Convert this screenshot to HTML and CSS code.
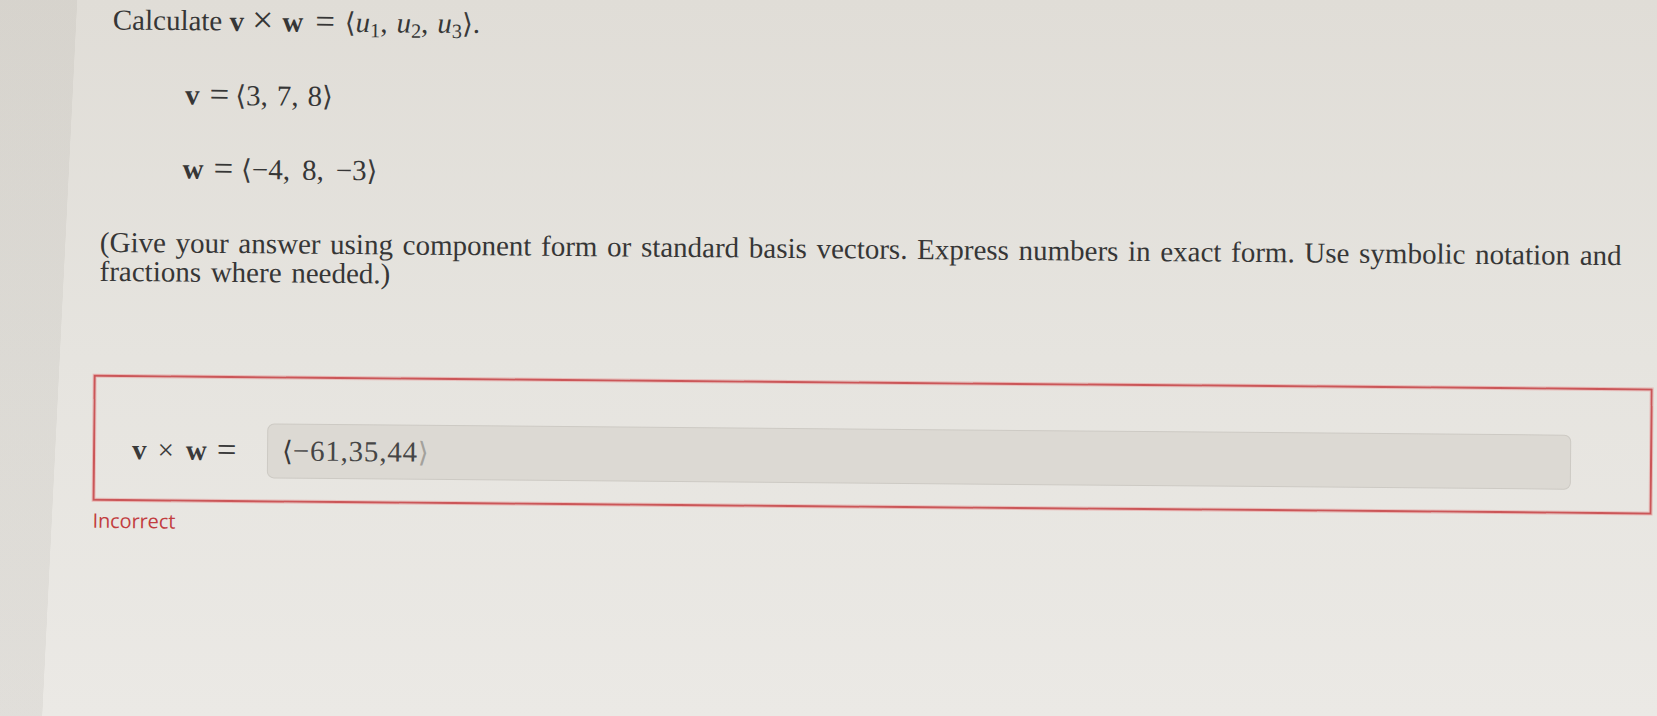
FILE: index.html
```html
<!DOCTYPE html>
<html lang="en">
<head>
<meta charset="utf-8">
<title>Cross product</title>
<link rel="stylesheet" href="styles.css">
</head>
<body>
<div class="page">
  <div class="content">
    <p class="question">Calculate <span class="m"><b class="vec">v</b><span class="bin">×</span><b class="vec">w</b><span class="rel">=</span><span class="br">⟨</span><i>u</i><sub>1</sub><span class="comma">,</span><i>u</i><sub>2</sub><span class="comma">,</span><i>u</i><sub>3</sub><span class="br">⟩</span></span>.</p>

    <div class="eq eq-v"><span class="m"><b class="vec">v</b><span class="rel">=</span><span class="br">⟨</span>3<span class="comma">,</span>7<span class="comma">,</span>8<span class="br">⟩</span></span></div>
    <div class="eq eq-w"><span class="m"><b class="vec">w</b><span class="rel">=</span><span class="br">⟨</span>−4<span class="comma">,</span>8<span class="comma">,</span>−3<span class="br">⟩</span></span></div>

    <p class="note">(Give your answer using component form or standard basis vectors. Express numbers in exact form. Use symbolic notation and fractions where needed.)</p>

    <div class="answer-box">
      <div class="answer-row">
        <span class="label m"><b class="vec">v</b><span class="bin">×</span><b class="vec">w</b><span class="rel">=</span></span>
        <div class="input"><span class="br">⟨</span><span class="ans">−61,35,44</span><span class="br ghost">⟩</span></div>
      </div>
    </div>
    <div class="status">Incorrect</div>
  </div>
</div>
</body>
</html>
```

FILE: styles.css
```css
html, body {
  margin: 0;
  padding: 0;
}

body {
  width: 1657px;
  height: 716px;
  overflow: hidden;
  background:
    linear-gradient(92.8deg, rgba(120, 115, 105, 0.09) 76.9px, rgba(0, 0, 0, 0) 77.4px),
    linear-gradient(180deg, #e0ddd7 0%, #e6e4df 50%, #ebe9e5 100%);
  font-family: "Liberation Serif", "Times New Roman", serif;
  color: #363636;
}

.page {
  width: 100%;
  height: 100%;
}

.content {
  transform: rotate(0.5deg);
  transform-origin: 0 0;
  padding-top: 0;
}

.question {
  margin: 0 0 0 113px;
  font-size: 29px;
  line-height: 34px;
}

.m {
  font-family: "Liberation Serif", "Times New Roman", serif;
}

.vec {
  font-weight: bold;
}

.bin {
  font-size: 1.3em;
  vertical-align: -0.04em;
  margin: 0 9px 0 8px;
}

.rel {
  font-size: 1.2em;
  vertical-align: -0.03em;
  margin: 0 10px 0 12px;
}

.comma {
  margin-right: 9px;
}

.br {
  font-family: "DejaVu Serif", serif;
  font-size: 0.95em;
  color: #3a3a3a;
}

i {
  font-style: italic;
}

sub {
  font-size: 0.7em;
  vertical-align: -0.25em;
  line-height: 0;
}

.eq {
  margin-left: 186px;
  font-size: 29px;
  line-height: 34px;
}

.eq .rel {
  margin: 0 6px 0 10px;
}

.eq .comma {
  margin-right: 9px;
}

.eq-v {
  margin-top: 40px;
}

.eq-w {
  margin-top: 40px;
  margin-left: 184px;
}

.eq-w .rel {
  margin-right: 8px;
}

.eq-w .comma {
  margin-right: 12px;
}

.note {
  margin: 43px 0 0 102px;
  width: 1545px;
  font-size: 29px;
  line-height: 29px;
  word-spacing: 2.4px;
}

.answer-box {
  margin: 89px 0 0 97px;
  width: 1559px;
  border: 2px solid #cb5658;
  box-shadow: 0 0 0 1px rgba(235, 150, 150, 0.55), inset 0 0 0 1px rgba(235, 150, 150, 0.45);
  padding: 45px 79px 22px 37px;
  box-sizing: border-box;
}

.answer-row {
  display: flex;
  align-items: center;
}

.label {
  width: 135px;
  flex: 0 0 auto;
  font-size: 29px;
  line-height: 34px;
  color: #3a3a3a;
}

.label .bin {
  font-size: 1em;
  vertical-align: 0;
  margin: 0 12px 0 11px;
}

.label .rel {
  margin: 0 0 0 10px;
}

.input {
  flex: 1 1 auto;
  height: 55px;
  box-sizing: border-box;
  border: 1px solid #cdcac4;
  border-radius: 7px;
  background: #dcd9d3;
  padding-left: 14px;
  display: flex;
  align-items: center;
  font-size: 29px;
  color: #464646;
}

.input .br {
  font-size: 0.95em;
}

.ans {
  letter-spacing: 0.8px;
}

.ghost {
  color: #a3a19c;
}

.status {
  margin: 8px 0 0 97px;
  font-family: "Open Sans", sans-serif;
  font-size: 20px;
  line-height: 24px;
  letter-spacing: -0.1px;
  color: #c23d40;
}
```
